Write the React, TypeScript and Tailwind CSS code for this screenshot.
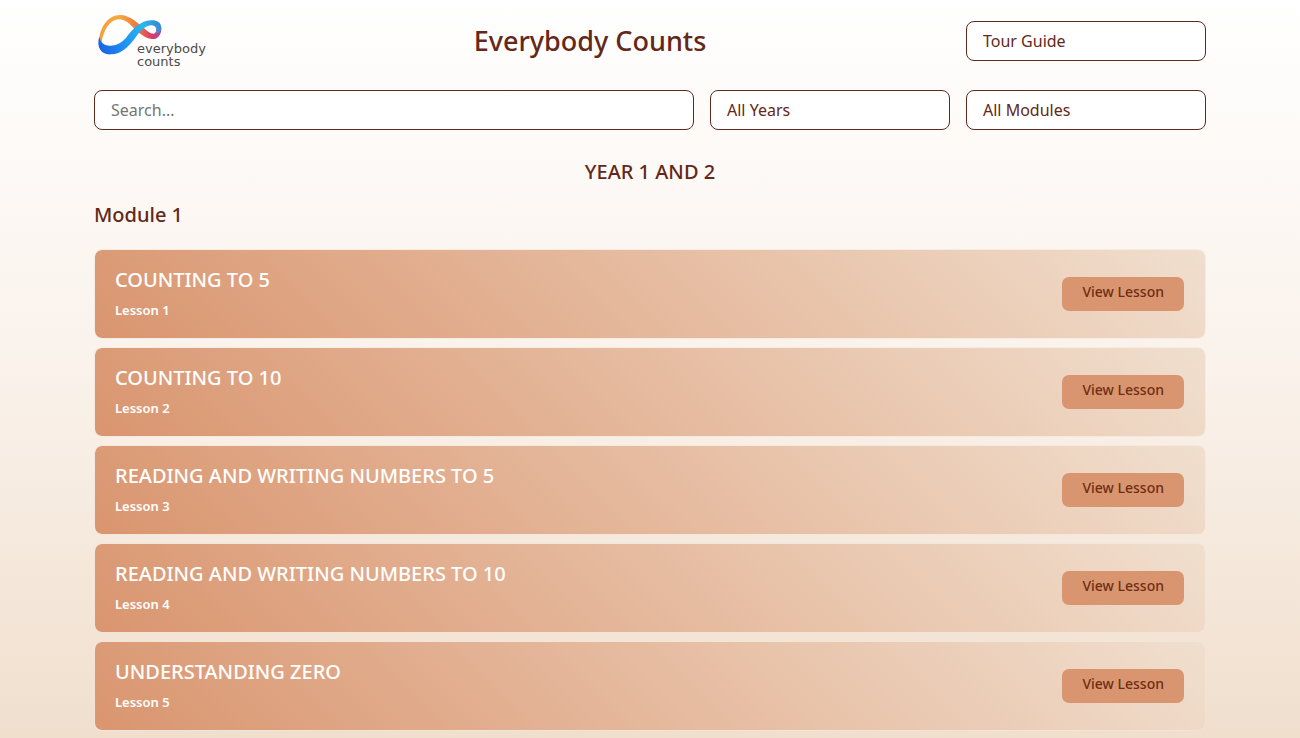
import { ChangeEvent, ReactNode, useState } from "react";

interface Lesson {
  id: number
  title: string
  year: string
  module: string
}

const lessons: Lesson[] = [
  { id: 1, title: "COUNTING TO 5", year: "1", module: "1" },
  { id: 2, title: "COUNTING TO 10", year: "1", module: "1" },
  { id: 3, title: "READING AND WRITING NUMBERS TO 5", year: "1", module: "1" },
  { id: 4, title: "READING AND WRITING NUMBERS TO 10", year: "1", module: "1" },
  { id: 5, title: "UNDERSTANDING ZERO", year: "1", module: "1" },
]

function Logo() {
  return (
    <svg viewBox="12 12 360 192" className="w-30 h-16" role="img" aria-label="everybody counts">
      <defs>
        <linearGradient id="warm" gradientUnits="userSpaceOnUse" x1="28" y1="90" x2="214" y2="80">
          <stop offset="0" stopColor="#f2a03c" />
          <stop offset="0.35" stopColor="#f6a83f" />
          <stop offset="0.62" stopColor="#ee7742" />
          <stop offset="0.85" stopColor="#d83a6b" />
          <stop offset="1" stopColor="#a24a9c" />
        </linearGradient>
        <linearGradient id="cool" gradientUnits="userSpaceOnUse" x1="30" y1="140" x2="214" y2="60">
          <stop offset="0" stopColor="#1763e0" />
          <stop offset="0.35" stopColor="#1f8df5" />
          <stop offset="0.75" stopColor="#27b9ee" />
          <stop offset="1" stopColor="#3d83d6" />
        </linearGradient>
      </defs>
      <path fill="url(#warm)" d="M28 112C26 70 54 28 94 30C122 33 140 52 158 66C171 78 183 88 192 86C198 83 200 77 199 68L214 68C215 92 200 104 185 102C164 99 150 86 134 72C119 56 105 43 86 43C60 44 40 76 35 112Z" />
      <path fill="url(#cool)" d="M28 94C18 128 34 150 62 148C96 147 116 124 136 98C152 77 164 64 182 61C196 60 202 70 199 84C209 84 214 76 214 68C213 52 200 45 183 46C148 48 128 74 110 96C97 112 82 122 62 122C42 123 30 112 28 94Z" />
      <text x="141" y="145" fontSize="39" className="font-['DejaVu_Sans'] fill-[#4c4a4a]">everybody</text>
      <text x="141" y="183" fontSize="39" className="font-['DejaVu_Sans'] fill-[#4c4a4a]">counts</text>
    </svg>
  )
}

interface SelectProps {
  label: string
  value: string
  onChange: (event: ChangeEvent<HTMLSelectElement>) => void
  children: ReactNode
}

function Select({ label, value, onChange, children }: SelectProps) {
  return (
    <select
      aria-label={label}
      value={value}
      onChange={onChange}
      className="appearance-none w-60 h-10 px-4 text-base bg-white border border-[#5e2a1c] rounded-lg"
    >
      {children}
    </select>
  )
}

function LessonCard({ lesson }: { lesson: Lesson }) {
  return (
    <li className="flex items-center justify-between px-5 py-4 rounded-lg border border-[#f3e6d8]/60 bg-clip-padding bg-linear-45 from-[#d9956f] to-[#f0dfce]">
      <div className="flex flex-col gap-1 text-white">
        <h3 className="text-xl leading-7 font-medium">{lesson.title}</h3>
        <p className="text-[13px] leading-6 font-semibold">Lesson {lesson.id}</p>
      </div>
      <button type="button" className="h-9 px-5 pb-1 text-sm font-medium rounded-lg border border-transparent bg-clip-padding bg-[#d9956f] text-[#6d2e14] hover:bg-[#cf865d]">
        View Lesson
      </button>
    </li>
  )
}

export default function App() {
  const [search, setSearch] = useState("")
  const [guide, setGuide] = useState("")
  const [year, setYear] = useState("")
  const [module, setModule] = useState("")

  const filtered = lessons.filter(lesson =>
    lesson.title.toLowerCase().includes(search.toLowerCase())
    && (!year || lesson.year === year)
    && (!module || lesson.module === module)
  )

  return (
    <div className="min-h-screen bg-linear-to-b from-white via-[#faf2eb] to-[#f0dfcd] font-['Noto_Sans',sans-serif] text-[#632818]">
      <div className="max-w-6xl mx-auto px-5 pt-[9px]">
        <header className="flex items-center justify-between">
          <Logo />
          <h1 className="text-[27px] leading-10 font-medium">Everybody Counts</h1>
          <Select label="Guide" value={guide} onChange={event => setGuide(event.target.value)}>
            <option value="">Tour Guide</option>
            <option value="lessons">Lessons</option>
          </Select>
        </header>

        <div className="flex gap-4 mt-[17px]">
          <input
            type="text"
            aria-label="Search"
            placeholder="Search..."
            value={search}
            onChange={event => setSearch(event.target.value)}
            className="flex-1 min-w-0 h-10 px-4 text-base bg-white border border-[#5e2a1c] rounded-lg placeholder:text-[#757575]"
          />
          <Select label="Year" value={year} onChange={event => setYear(event.target.value)}>
            <option value="">All Years</option>
            <option value="1">Year 1 and 2</option>
          </Select>
          <Select label="Module" value={module} onChange={event => setModule(event.target.value)}>
            <option value="">All Modules</option>
            <option value="1">Module 1</option>
          </Select>
        </div>

        <main className="mt-7">
          <h2 className="text-xl leading-7 font-medium text-center">YEAR 1 AND 2</h2>
          <h2 className="mt-[15px] text-xl leading-7 font-medium">Module 1</h2>
          <ul className="flex flex-col gap-2 mt-5 pb-2">
            {filtered.map(lesson => <LessonCard key={lesson.id} lesson={lesson} />)}
          </ul>
        </main>
      </div>
    </div>
  )
}
